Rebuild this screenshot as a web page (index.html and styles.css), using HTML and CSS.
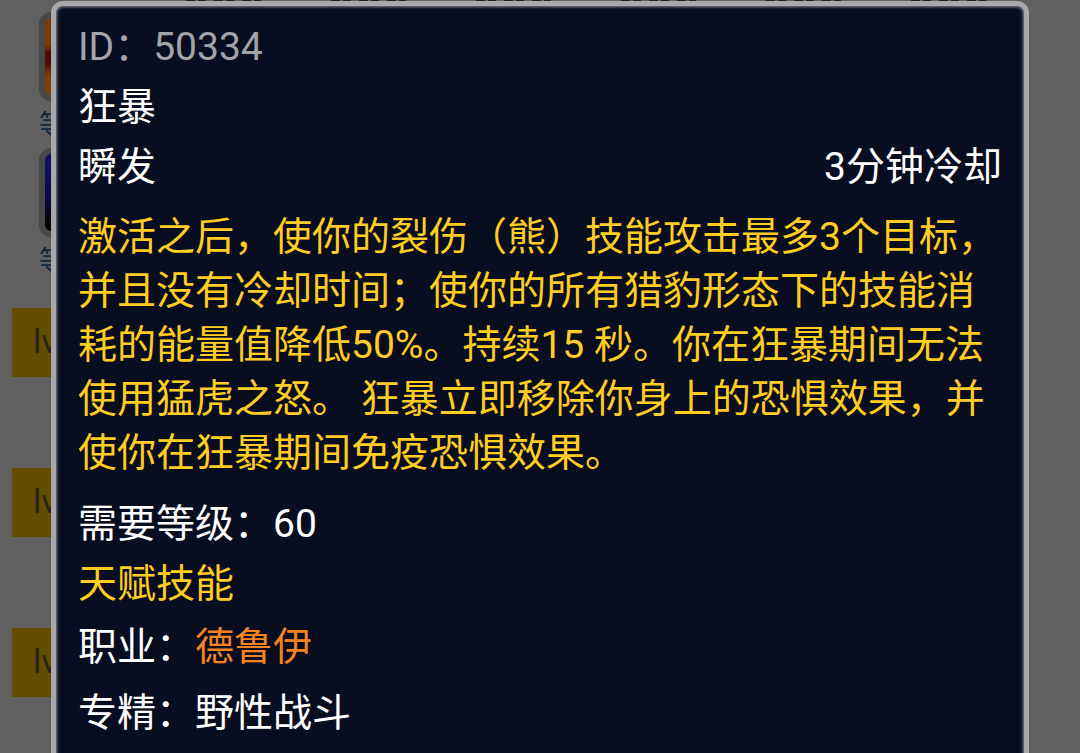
FILE: index.html
```
<!DOCTYPE html>
<html lang="zh-CN">
<head>
  <meta charset="UTF-8">
  <meta name="viewport" content="width=device-width, initial-scale=1.0">
  <title>狂暴</title>
  <link rel="stylesheet" href="styles.css">
</head>
<body>
  <!-- talent page behind the tooltip -->
  <main class="talents">
    <div class="marks">
      <span></span><span></span><span></span><span></span><span></span><span></span>
    </div>
    <div class="skill">
      <div class="skill-icon fire"></div>
      <div class="skill-level">等</div>
    </div>
    <div class="skill">
      <div class="skill-icon arcane"></div>
      <div class="skill-level">等</div>
    </div>
    <div class="levels">
      <div class="level">lv</div>
      <div class="level">lv</div>
      <div class="level">lv</div>
    </div>
  </main>

  <section class="tooltip">
    <div class="row spell-id">ID：50334</div>
    <div class="row">狂暴</div>
    <div class="row cast">
      <span>瞬发</span>
      <span>3分钟冷却</span>
    </div>
    <p class="desc">激活之后，使你的裂伤（熊）技能攻击最多3个目标，并且没有冷却时间；使你的所有猎豹形态下的技能消耗的能量值降低50%。持续15 秒。你在狂暴期间无法使用猛虎之怒。 狂暴立即移除你身上的恐惧效果，并使你在狂暴期间免疫恐惧效果。</p>
    <div class="row">需要等级：60</div>
    <div class="row gold">天赋技能</div>
    <div class="row tall">职业：<span class="druid">德鲁伊</span></div>
    <div class="row tall">专精：野性战斗</div>
  </section>
</body>
</html>
```
FILE: styles.css
```
* {
  box-sizing: border-box;
}

body {
  margin: 0;
  height: 100vh;
  overflow: hidden;
  position: relative;
  background: #606060;
  color: #fff;
  font-family: Roboto, "Noto Sans CJK SC", sans-serif;
}

.talents {
  padding: 0 12px;
}

.marks {
  display: flex;
  gap: 70px;
  height: 12px;
  padding-left: 174px;
}

.marks span {
  width: 75px;
  height: 1px;
  background: repeating-linear-gradient(to right, #222 0 9px, #606060 9px 12px, #222 12px 20px, #606060 20px 28px);
}

.skill {
  height: 136px;
  padding-left: 27px;
}

.skill-icon {
  width: 89px;
  height: 89px;
  border: 6px solid #484848;
  border-radius: 12px;
}

.fire {
  background: linear-gradient(#7a3a08 0 35%, #4a1008 45% 60%, #7a4208 75%);
}

.arcane {
  background: linear-gradient(#10145a, #0a0a40 60%, #050508 85%);
}

.skill-level {
  color: #12283c;
  font-size: 28px;
  line-height: 50px;
}

.levels {
  display: flex;
  flex-direction: column;
  gap: 91px;
  margin-top: 24px;
}

.level {
  width: 120px;
  height: 69px;
  padding-left: 21px;
  background: #644c00;
  color: #2a2414;
  font-size: 34px;
  line-height: 66px;
}

.tooltip {
  position: absolute;
  top: 1px;
  left: 51px;
  right: 51px;
  min-height: 100%;
  padding: 11px 22px 24px;
  border: 5px solid #a8a8aa;
  border-radius: 12px;
  background: #080d20;
  box-shadow: inset 0 0 3px 1px #8a8a90;
  font-size: 39px;
}

.row {
  line-height: 60px;
}

.tall {
  line-height: 66px;
}

.cast {
  display: flex;
  justify-content: space-between;
}

.desc {
  margin: 13px 0 14px;
  color: #fc2;
  line-height: 54px;
}

.spell-id {
  color: #a3a4a8;
}

.gold {
  color: #fc2;
}

.druid {
  color: #f58220;
}
```
